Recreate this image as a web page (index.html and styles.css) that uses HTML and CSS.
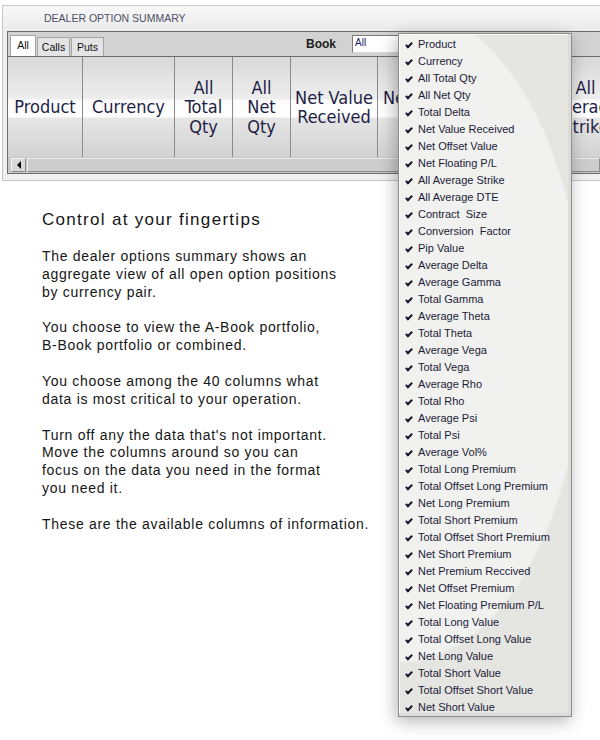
FILE: index.html
```html
<!DOCTYPE html>
<html lang="en">
<head>
    <meta charset="UTF-8">
    <meta name="viewport" content="width=device-width, initial-scale=1.0">
    <title>Dealer Option Summary</title>
    <link rel="stylesheet" href="styles.css">
</head>
<body>
<div class="page">

    <!-- Summary window -->
    <div class="summaryPanel">
        <div class="panelTitle">DEALER OPTION SUMMARY</div>
        <div class="gridFrame">
            <div class="toolbar">
                <div class="tabs">
                    <span class="tab tabAll active">All</span>
                    <span class="tab">Calls</span>
                    <span class="tab">Puts</span>
                </div>
                <span class="bookLabel">Book</span>
                <span class="bookSelect">All</span>
            </div>
            <div class="gridHeader">
                <div class="col colProduct">Product</div>
                <div class="col colCurrency">Currency</div>
                <div class="col colQty">All Total Qty</div>
                <div class="col colQty">All Net Qty</div>
                <div class="col colNetValue">Net Value Received</div>
                <div class="col colOffset">Net Offset Value</div>
                <div class="col colFloating">Net Floating P/L</div>
                <div class="col colStrike">All Average Strike</div>
                <div class="col colRest">All Average DTE</div>
            </div>
            <div class="hScroll">
                <span class="scrollBtn"><span class="arrowLeft"></span></span>
                <span class="scrollThumb"></span>
            </div>
        </div>
    </div>

    <!-- Intro text -->
    <div class="intro">
        <h2>Control at your fingertips</h2>
        <p>The dealer options summary shows an<br>
           aggregate view of all open option positions<br>
           by currency pair.</p>
        <p>You choose to view the A-Book portfolio,<br>
           B-Book portfolio or combined.</p>
        <p>You choose among the 40 columns what<br>
           data is most critical to your operation.</p>
        <p>Turn off any the data that's not important.<br>
           Move the columns around so you can<br>
           focus on the data you need in the format<br>
           you need it.</p>
        <p>These are the available columns of information.</p>
    </div>

    <!-- Column chooser menu -->
    <ul class="columnMenu">
        <li>Product</li>
        <li>Currency</li>
        <li>All Total Qty</li>
        <li>All Net Qty</li>
        <li>Total Delta</li>
        <li>Net Value Received</li>
        <li>Net Offset Value</li>
        <li>Net Floating P/L</li>
        <li>All Average Strike</li>
        <li>All Average DTE</li>
        <li>Contract&nbsp; Size</li>
        <li>Conversion&nbsp; Factor</li>
        <li>Pip Value</li>
        <li>Average Delta</li>
        <li>Average Gamma</li>
        <li>Total Gamma</li>
        <li>Average Theta</li>
        <li>Total Theta</li>
        <li>Average Vega</li>
        <li>Total Vega</li>
        <li>Average Rho</li>
        <li>Total Rho</li>
        <li>Average Psi</li>
        <li>Total Psi</li>
        <li>Average Vol%</li>
        <li>Total Long Premium</li>
        <li>Total Offset Long Premium</li>
        <li>Net Long Premium</li>
        <li>Total Short Premium</li>
        <li>Total Offset Short Premium</li>
        <li>Net Short Premium</li>
        <li>Net Premium Reccived</li>
        <li>Net Offset Premium</li>
        <li>Net Floating Premium P/L</li>
        <li>Total Long Value</li>
        <li>Total Offset Long Value</li>
        <li>Net Long Value</li>
        <li>Total Short Value</li>
        <li>Total Offset Short Value</li>
        <li>Net Short Value</li>
    </ul>

</div>
</body>
</html>
```

FILE: styles.css
```css
/* Page */
body {
    margin: 0;
    background: #fff;
    font-family: "Liberation Sans", Arial, sans-serif;
    overflow: hidden;
}

.page {
    position: relative;
    width: 600px;
    height: 740px;
    overflow: hidden;
}

/* Summary window */
.summaryPanel {
    margin: 5px 0 0 2px;
    border: 1px solid #c6c6c6;
    border-right: 0;
    background: #f0f0f0;
    padding: 0 0 6px 4px;
}

.panelTitle {
    margin-left: -4px;
    height: 25px;
    line-height: 25px;
    padding-left: 41px;
    font-size: 10.5px;
    color: #4e4e66;
    background: linear-gradient(#f8f8f8, #ebebeb);
}

.gridFrame {
    border: 1px solid #6c6c6c;
    border-right: 0;
    background: #d2d2d2;
}

/* Tabs + book row */
.toolbar {
    display: flex;
    align-items: flex-end;
    height: 24px;
    border-bottom: 1px solid #6c6c6c;
    background: #d2d2d2;
    white-space: nowrap;
}

.tabs {
    display: flex;
    align-items: flex-end;
    padding-left: 2px;
}

.tab {
    width: 33px;
    height: 19px;
    line-height: 18px;
    margin-right: 1px;
    box-sizing: border-box;
    border: 1px solid #a6a6a6;
    border-bottom: 0;
    background: #e4e4e4;
    font-size: 10.5px;
    text-align: center;
    color: #111;
}

.tab.tabAll {
    width: 26px;
}

.tab.active {
    height: 21px;
    background: #fff;
}

.bookLabel {
    align-self: center;
    margin-left: 201px;
    font-size: 12px;
    font-weight: bold;
    color: #1e1e1e;
}

.bookSelect {
    align-self: center;
    margin-left: 16px;
    width: 60px;
    height: 18px;
    box-sizing: border-box;
    border: 1px solid;
    border-color: #7c7c7c #dadada #dadada #7c7c7c;
    background: #fff;
    padding-left: 2px;
    font-size: 10px;
    line-height: 14px;
    color: #1c1c6a;
}

/* Column headers */
.gridHeader {
    display: flex;
    height: 100px;
    overflow: hidden;
}

.col {
    flex: none;
    display: flex;
    align-items: center;
    justify-content: center;
    box-sizing: border-box;
    padding: 0 3px;
    border-right: 1px solid #8a8a8a;
    text-align: center;
    font-family: "DejaVu Sans Condensed", "DejaVu Sans", sans-serif;
    font-stretch: condensed;
    font-size: 18px;
    line-height: 19.5px;
    color: #1e1e46;
    background: linear-gradient(#d8d8d8 0%, #eeeeee 42%, #fbfbfb 43%, #ffffff 60%, #e6e6e6 61%, #d2d2d2 100%);
}

.colProduct  { width: 75px; }
.colCurrency { width: 92px; }
.colQty      { width: 58px; }
.colNetValue { width: 87px; }
.colOffset   { width: 93px; }
.colFloating { width: 85px; }
.colStrike   { width: 60px; }
.colRest     { width: 70px; }

/* Horizontal scrollbar */
.hScroll {
    display: flex;
    height: 16px;
    box-sizing: border-box;
    padding: 1px 0 1px 3px;
    background: #c8c8c8;
}

.scrollBtn {
    display: flex;
    align-items: center;
    justify-content: center;
    width: 15px;
    box-sizing: border-box;
    border: 1px solid;
    border-color: #f6f6f6 #8c8c8c #8c8c8c #f6f6f6;
    background: #d8d8d8;
}

.arrowLeft {
    width: 0;
    height: 0;
    border-top: 4px solid transparent;
    border-bottom: 4px solid transparent;
    border-right: 4px solid #000;
}

.scrollThumb {
    flex: 1;
    margin-left: 1px;
    border: 1px solid;
    border-color: #ededed #8c8c8c #8c8c8c #ededed;
    background: #cdcdcd;
}

/* Intro text */
.intro {
    margin: 29px 0 0 42px;
    color: #151515;
}

.intro h2 {
    margin: 0 0 18px;
    font-size: 17px;
    font-weight: normal;
    line-height: 20px;
    letter-spacing: 1.3px;
}

.intro p {
    margin: 0 0 18px;
    font-size: 14px;
    line-height: 17.8px;
    letter-spacing: 0.7px;
}

/* Column chooser dropdown */
.columnMenu {
    position: absolute;
    left: 398px;
    top: 33px;
    width: 174px;
    box-sizing: border-box;
    margin: 0;
    padding: 2px 0 0;
    list-style: none;
    border: 1px solid #8e8e8e;
    background: radial-gradient(ellipse 185px 330px at 0 300px, #f1f1ef 99%, #e5e5e1 100%);
    box-shadow: inset -3px -3px 0 #dcdcd8, inset 1px 1px 0 #fbfbfa, -2px 4px 16px rgba(0, 0, 0, 0.3);
    z-index: 10;
}

.columnMenu li {
    height: 17px;
    line-height: 17px;
    padding-left: 8px;
    font-size: 11px;
    color: #1b1b38;
    white-space: nowrap;
}

.columnMenu li::before {
    content: "";
    display: inline-block;
    width: 2px;
    height: 5px;
    margin: 0 7px 2px 0;
    border: solid #15152a;
    border-width: 0 2px 2px 0;
    transform: rotate(45deg);
    vertical-align: middle;
}
```
